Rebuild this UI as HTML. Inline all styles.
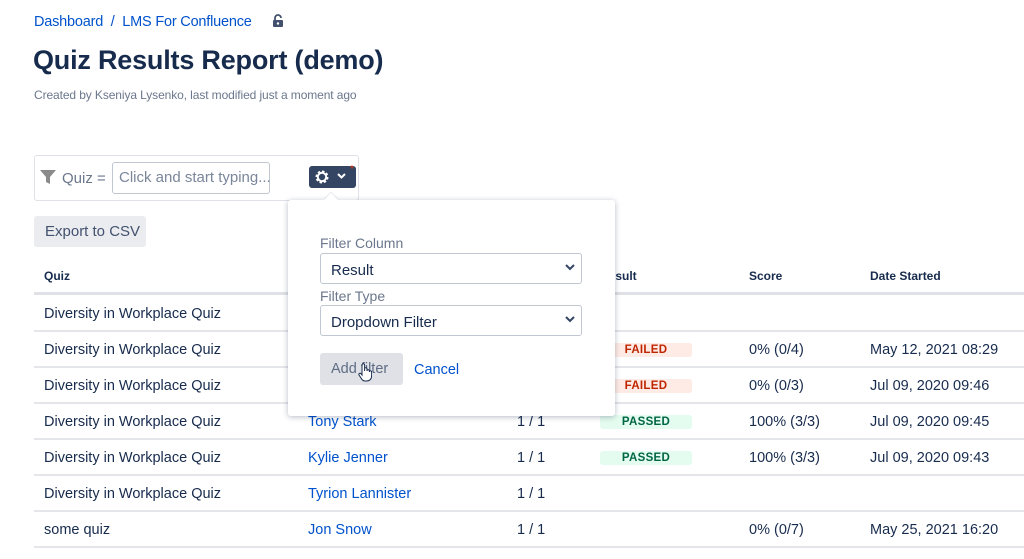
<!DOCTYPE html>
<html><head><style>
*{box-sizing:border-box;margin:0;padding:0}
body{width:1024px;height:559px;overflow:hidden;background:#fff;font-family:"Liberation Sans",sans-serif;color:#172b4d;position:relative}
.a{position:absolute;white-space:nowrap}
.link{color:#0052cc}
.row{position:absolute;left:34px;width:990px;height:36px;border-bottom:2px solid #e4e6ea;font-size:14.5px}
.row span{position:absolute;top:10px}
.b{font-size:11.5px;font-weight:bold;padding:1px 0;width:92px;text-align:center;border-radius:3px;top:11px!important;left:566px;letter-spacing:0.3px}
.f{background:#ffebe6;color:#bf2600}.p{background:#e3fcef;color:#006644}
.sel{position:absolute;left:320px;width:262px;height:31px;border:1px solid #c1c7d0;border-radius:3px;font-size:15px;padding:8px 10px;color:#172b4d}
.sel svg{position:absolute;right:6px;top:10px}
</style></head><body>
<div class="a link" style="left:34px;top:14px;font-size:14.5px;letter-spacing:-0.2px">Dashboard &nbsp;/ &nbsp;LMS For Confluence</div>
<svg class="a" style="left:272px;top:14px" width="12" height="14" viewBox="0 0 12 14"><rect x="1" y="6" width="10" height="7" rx="1" fill="#42526e"/><path d="M3 6V4a3 3 0 0 1 6 0" stroke="#42526e" stroke-width="1.8" fill="none"/><circle cx="6" cy="9.5" r="1.2" fill="#fff"/></svg>
<div class="a" style="left:33px;top:45px;font-size:27px;font-weight:bold;letter-spacing:-0.2px">Quiz Results Report (demo)</div>
<div class="a" style="left:34px;top:88px;font-size:12px;color:#6b778c;letter-spacing:-0.1px">Created by Kseniya Lysenko, last modified just a moment ago</div>
<div class="a" style="left:34px;top:155px;width:325px;height:46px;border:1px solid #dfe1e6;border-radius:3px"></div>
<svg class="a" style="left:40px;top:169px" width="16" height="16" viewBox="0 0 16 16"><path d="M0 1h16L10 8v7L6 13V8z" fill="#8a8a8a"/></svg>
<div class="a" style="left:62px;top:170px;font-size:15px;color:#6b778c">Quiz =</div>
<div class="a" style="left:112px;top:162px;width:158px;height:32px;border:1px solid #c1c7d0;border-radius:3px;font-size:15px;color:#7a869a;padding:6px 6px">Click and start typing...</div>
<div class="a" style="left:309px;top:166px;width:47px;height:22px;background:#344563;border-radius:3px"></div>
<svg class="a" style="left:313px;top:168px" width="18" height="18" viewBox="0 0 18 18"><circle cx="9" cy="9" r="5" fill="none" stroke="#fff" stroke-width="3" stroke-dasharray="2.2 1.7"/><circle cx="9" cy="9" r="4.2" fill="none" stroke="#fff" stroke-width="2"/></svg>
<svg class="a" style="left:337px;top:173px" width="9" height="6" viewBox="0 0 9 6"><path d="M1 1l3.5 3.5L8 1" stroke="#fff" stroke-width="2" fill="none"/></svg>
<div class="a" style="left:350px;top:164px;color:#de350b;font-size:10px">*</div>
<div class="a" style="left:34px;top:216px;width:112px;height:31px;background:#ebecf0;border-radius:3px;font-size:15px;padding:7px 11px;color:#42526e">Export to CSV</div>
<div class="row" style="top:259px;border-bottom:3px solid #dfe1e6;font-size:12px;font-weight:bold"><span style="left:10px;top:10px">Quiz</span><span style="left:566px;top:10px">Result</span><span style="left:715px;top:10px">Score</span><span style="left:836px;top:10px">Date Started</span></div>
<div class="row" style="top:296px"><span style="left:10px">Diversity in Workplace Quiz</span></div>
<div class="row" style="top:332px"><span style="left:10px">Diversity in Workplace Quiz</span><span class="b f">FAILED</span><span style="left:715px">0% (0/4)</span><span style="left:836px">May 12, 2021 08:29</span></div>
<div class="row" style="top:368px"><span style="left:10px">Diversity in Workplace Quiz</span><span class="b f">FAILED</span><span style="left:715px">0% (0/3)</span><span style="left:836px">Jul 09, 2020 09:46</span></div>
<div class="row" style="top:404px"><span style="left:10px">Diversity in Workplace Quiz</span><span class="link" style="left:274px">Tony Stark</span><span style="left:483px">1 / 1</span><span class="b p">PASSED</span><span style="left:715px">100% (3/3)</span><span style="left:836px">Jul 09, 2020 09:45</span></div>
<div class="row" style="top:440px"><span style="left:10px">Diversity in Workplace Quiz</span><span class="link" style="left:274px">Kylie Jenner</span><span style="left:483px">1 / 1</span><span class="b p">PASSED</span><span style="left:715px">100% (3/3)</span><span style="left:836px">Jul 09, 2020 09:43</span></div>
<div class="row" style="top:476px"><span style="left:10px">Diversity in Workplace Quiz</span><span class="link" style="left:274px">Tyrion Lannister</span><span style="left:483px">1 / 1</span></div>
<div class="row" style="top:512px"><span style="left:10px">some quiz</span><span class="link" style="left:274px">Jon Snow</span><span style="left:483px">1 / 1</span><span style="left:715px">0% (0/7)</span><span style="left:836px">May 25, 2021 16:20</span></div>
<div class="a" style="left:288px;top:200px;width:327px;height:216px;background:#fff;border-radius:3px;box-shadow:0 1px 6px rgba(9,30,66,.3)"></div>
<div class="a" style="left:326px;top:195px;width:10px;height:10px;background:#fff;transform:rotate(45deg);box-shadow:-1px -1px 1px rgba(9,30,66,.1)"></div>
<div class="a" style="left:320px;top:235px;font-size:14px;color:#6b778c">Filter Column</div>
<div class="sel" style="top:253px">Result<svg width="10" height="7" viewBox="0 0 10 7"><path d="M1 1l4 4 4-4" stroke="#344563" stroke-width="2" fill="none"/></svg></div>
<div class="a" style="left:320px;top:288px;font-size:14px;color:#6b778c">Filter Type</div>
<div class="sel" style="top:305px">Dropdown Filter<svg width="10" height="7" viewBox="0 0 10 7"><path d="M1 1l4 4 4-4" stroke="#344563" stroke-width="2" fill="none"/></svg></div>
<div class="a" style="left:320px;top:353px;width:83px;height:32px;background:#dfe1e6;border-radius:3px;font-size:14.5px;padding:8px 11px;color:#5e6c84">Add filter</div>
<svg class="a" style="left:358px;top:362px" width="14" height="20" viewBox="0 0 14 20"><path d="M4 10V3a1.3 1.3 0 0 1 2.6 0v6l0-2a1.2 1.2 0 0 1 2.4 0v2a1.2 1.2 0 0 1 2.4 0v1a1.1 1.1 0 0 1 2.2 0v4c0 3-2 5-5 5H7c-2 0-3-1-4-3l-2-3a1.2 1.2 0 0 1 2-1.3L4 13z" fill="#fff" stroke="#172b4d" stroke-width="1"/></svg>
<div class="a link" style="left:414px;top:362px;font-size:14.5px">Cancel</div>
</body></html>
